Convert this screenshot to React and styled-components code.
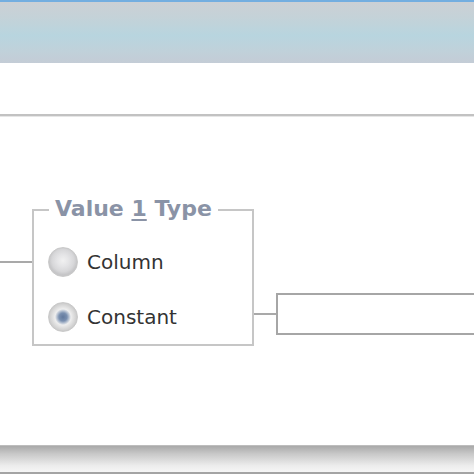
import React from 'react'
import styled, { createGlobalStyle } from 'styled-components'

const GlobalStyle = createGlobalStyle`
    html, body {
        margin: 0;
        padding: 0;
        background: #ffffff;
    }
`

const options = [
    { label: 'Column', checked: false },
    { label: 'Constant', checked: true }
]

const App = () => {
    return (
        <Page>
            <GlobalStyle />
            <TitleBar />
            <Toolbar />
            <Divider />
            <Canvas>
                <Row>
                    <Wire top={52} width={32} />
                    <GroupBox>
                        <Legend>
                            Value <u>1</u> Type
                        </Legend>
                        {
                            options.map((item) => (
                                <Option key={item.label}>
                                    <Radio checked={item.checked} />
                                    <Label>{ item.label }</Label>
                                </Option>
                            ))
                        }
                    </GroupBox>
                    <Wire top={104} width={22} />
                    <TextBox />
                </Row>
            </Canvas>
            <StatusShadow />
            <Footer />
        </Page>
    )
}

const Page = styled.div`
    display: flex;
    flex-direction: column;
    width: 474px;
    height: 474px;
    overflow: hidden;
    background: #ffffff;
    font-family: "DejaVu Sans", "Liberation Sans", sans-serif;
`

const TitleBar = styled.div`
    height: 61px;
    border-top: 2px solid #74aee0;
    background: linear-gradient(#ccd0d5 0%, #c4d2d8 25%, #b8d5df 55%, #c0d1da 80%, #c4ccd6 100%);
`

const Toolbar = styled.div`
    height: 51px;
    background: #ffffff;
`

const Divider = styled.div`
    height: 2px;
    background: #c2c2c2;
    border-bottom: 1px solid #e6e6e6;
`

const Canvas = styled.div`
    flex: 1;
    padding-top: 92px;
    overflow: hidden;
`

const Row = styled.div`
    display: flex;
    align-items: flex-start;
`

const Wire = styled.div`
    flex: none;
    width: ${props => props.width}px;
    height: 2px;
    margin-top: ${props => props.top}px;
    background: #a9a9a9;
`

const GroupBox = styled.div`
    position: relative;
    flex: none;
    box-sizing: border-box;
    width: 222px;
    height: 137px;
    border: 2px solid #c6c6c6;
    padding: 36px 0 0 14px;
    display: flex;
    flex-direction: column;
    gap: 25px;
`

const Legend = styled.div`
    position: absolute;
    top: -16px;
    left: 15px;
    padding: 0 6px 0 6px;
    background: #ffffff;
    color: #8a93a6;
    font-size: 22px;
    font-weight: bold;
    line-height: 27px;

    u {
        text-decoration-thickness: 2px;
        text-underline-offset: 3px;
    }
`

const Option = styled.div`
    display: flex;
    align-items: center;
    gap: 9px;
`

const Radio = styled.div`
    box-sizing: border-box;
    width: 30px;
    height: 30px;
    border-radius: 50%;
    border: 1px solid #c9c9c9;
    background: ${props => props.checked
        ? 'radial-gradient(circle at 50% 50%, #62799d 0px, #7a90b0 4px, #b3bfd0 6px, #eeeeee 8px, #e2e2e2 10px, #cbcbcb 14px)'
        : 'radial-gradient(circle at 50% 45%, #f1f1f1 0px, #e4e4e6 6px, #d7d7d9 11px, #c6c6c8 14px)'};
`

const Label = styled.span`
    color: #333333;
    font-size: 20px;
    line-height: 24px;
`

const TextBox = styled.div`
    flex: none;
    box-sizing: border-box;
    width: 240px;
    height: 42px;
    margin-top: 84px;
    border: 2px solid #a6a6a6;
    background: #ffffff;
`

const StatusShadow = styled.div`
    height: 26px;
    border-top: 1px solid #bdbdbd;
    background: linear-gradient(#a9a9a9 0%, #c8c8c8 30%, #ececec 75%, #f6f6f6 100%);
`

const Footer = styled.div`
    height: 2px;
    background: #a4a4a4;
`

export default App
